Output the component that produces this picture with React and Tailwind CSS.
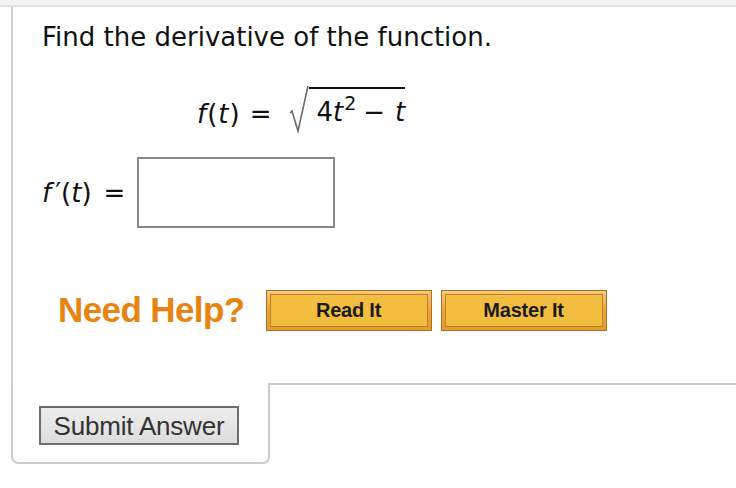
import React from 'react'

const mathFont = { fontFamily: '"DejaVu Sans", Verdana, sans-serif' }
const arial = { fontFamily: '"Liberation Sans", Arial, sans-serif' }

const HelpButton = ({ label, width }) => (
  <button
    className="h-[41px] border border-[#a8702c] bg-gradient-to-b from-[#f8c878] via-[#f0a32e] to-[#e89a2a] p-[3px]"
    style={{ width }}
  >
    <div className="h-full w-full border border-[#b7822f] bg-[#f3bd3f] flex items-center justify-center">
      <span className="text-[20px] font-bold text-[#1a1a1a] tracking-[-0.2px]" style={arial}>
        {label}
      </span>
    </div>
  </button>
)

const Radical = ({ children }) => (
  <span className="inline-flex items-end">
    <svg width="20" height="50" viewBox="0 0 20 50" className="mb-[-6px]">
      <path d="M1 28 L3 26 L9 46 L19 1" fill="none" stroke="#6b6b6b" strokeWidth="1.6" />
    </svg>
    <span className="border-t-2 border-[#111] pl-[7px] pt-[8px] leading-[30px] whitespace-nowrap">{children}</span>
  </span>
)

export default function App() {
  return (
    <div className="w-[736px] h-[488px] bg-white text-[#111] overflow-hidden">
      <div className="h-[7px] bg-[#f4f4f4] border-b-2 border-[#e1e1e1]" />
      <div className="ml-[11px] h-[376px] border-l-2 border-[#d0d0d0] pl-[29px]">
        <div className="pt-[15px] text-[26px] leading-[30px]" style={mathFont}>
          Find the derivative of the function.
        </div>

        <div className="mt-[33px] ml-[155px] flex items-end text-[26px] leading-[30px]" style={mathFont}>
          <span className="tracking-[1px]">
            <span className="italic">f</span>
            <span>(</span>
            <span className="italic">t</span>
            <span>)</span>
          </span>
          <span className="ml-[9px] mr-[18px]">=</span>
          <Radical>
            <span>4</span>
            <span className="italic">t</span>
            <span className="text-[19px] relative top-[-11px] ml-[1px]">2</span>
            <span className="ml-[7px] mr-[10px]">−</span>
            <span className="italic">t</span>
          </Radical>
        </div>

        <div className="mt-[28px] flex items-center" style={mathFont}>
          <span className="text-[26px] leading-[30px] whitespace-nowrap">
            <span className="italic">f</span>
            <span className="ml-[4px]">′(</span>
            <span className="italic">t</span>
            <span>)</span>
            <span className="ml-[12px]">=</span>
          </span>
          <div className="ml-[12px] w-[198px] h-[71px] border-2 border-[#888] bg-white" />
        </div>

        <div className="mt-[56px] ml-[16px] flex items-center">
          <span className="text-[35px] font-bold text-[#e8830f] tracking-[-0.6px] mr-[21px]" style={arial}>
            Need Help?
          </span>
          <HelpButton label="Read It" width={166} />
          <div className="w-[9px]" />
          <HelpButton label="Master It" width={166} />
        </div>
      </div>

      <div className="flex">
        <div className="ml-[11px] w-[259px] h-[81px] border-2 border-t-0 border-[#cccccc] rounded-b-[7px] pl-[26px] pt-[23px]">
          <button
            className="w-[200px] h-[39px] border-2 border-[#6d6d6d] bg-gradient-to-b from-[#eeeeee] to-[#dcdcdc] text-[26px] text-[#333] leading-none tracking-[-0.2px]"
            style={arial}
          >
            Submit Answer
          </button>
        </div>
        <div className="flex-1 border-t-2 border-[#c8c8c8]" />
      </div>
    </div>
  )
}
